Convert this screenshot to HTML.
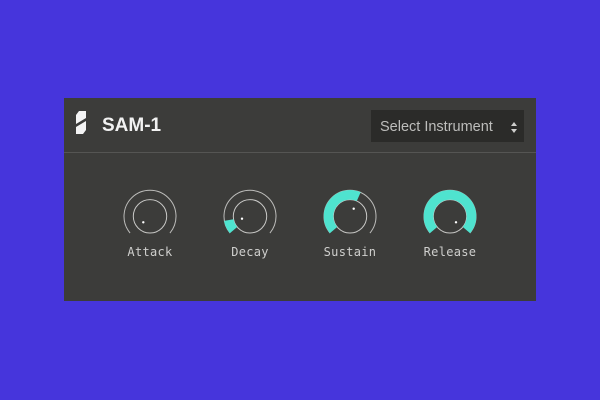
<!DOCTYPE html>
<html><head><meta charset="utf-8"><style>
html,body{margin:0;padding:0;width:600px;height:400px;background:#4635dc;overflow:hidden;font-family:"Liberation Sans",sans-serif}
.panel{position:absolute;left:64px;top:98px;width:472px;height:203px;background:#3c3c3a}
.div{position:absolute;left:0;top:54px;width:472px;height:1px;background:#555553}
.title{position:absolute;left:38px;top:17px;font-size:19px;font-weight:bold;color:#f2f2f2}
.sel{position:absolute;left:307px;top:12px;width:153px;height:32px;background:#2b2b29;color:#bdbdbb;font-size:14.5px;line-height:34px;box-sizing:border-box;padding-left:9px}
.lbl{position:absolute;top:147px;width:80px;text-align:center;font-family:"DejaVu Sans Mono","Liberation Mono",monospace;font-size:12px;letter-spacing:0.3px;color:#cfcfcd}
svg{position:absolute;left:0;top:0}
</style></head><body>
<div class="panel">
<div class="title">SAM-1</div>
<div class="sel">Select Instrument</div>
<div class="div"></div>
<div class="lbl" style="left:46px">Attack</div>
<div class="lbl" style="left:146px">Decay</div>
<div class="lbl" style="left:246px">Sustain</div>
<div class="lbl" style="left:346px">Release</div>
</div>
<svg width="600" height="400" id="s">
<polygon points="79,111 86,111 86,118 76,124 76,115" fill="#f4f4f4"/>
<polygon points="86,121 86,130 83,134 76,134 76,127" fill="#f4f4f4"/>
<polygon points="511,126 514,122 517,126" fill="#cfcfcd"/>
<polygon points="511,129 514,133 517,129" fill="#cfcfcd"/>
</svg>
<script>
var s=document.getElementById('s'),ns='http://www.w3.org/2000/svg';
function pt(cx,cy,r,a){a=a*Math.PI/180;return (cx+r*Math.cos(a)).toFixed(2)+','+(cy+r*Math.sin(a)).toFixed(2);}
function arc(cx,cy,r,a0,a1,col,w){var p=document.createElementNS(ns,'path');var large=(a1-a0)>180?1:0;p.setAttribute('d','M'+pt(cx,cy,r,a0)+' A'+r+','+r+' 0 '+large+' 1 '+pt(cx,cy,r,a1));p.setAttribute('fill','none');p.setAttribute('stroke',col);p.setAttribute('stroke-width',w);s.appendChild(p);}
var K=[[150,0,143.3,222.3],[250,30,242,218.7],[350,154,353.7,208.7],[450,260,456,222.3]];
K.forEach(function(k){var cx=k[0],cy=216.3;
arc(cx,cy,26,140,400,'#bdbdbb',1);
var c=document.createElementNS(ns,'circle');c.setAttribute('cx',cx);c.setAttribute('cy',cy);c.setAttribute('r',16.7);c.setAttribute('fill','none');c.setAttribute('stroke','#c8c8c6');c.setAttribute('stroke-width',1);s.appendChild(c);
if(k[1]>0)arc(cx,cy,21.5,140,140+k[1],'#4fe3cf',9.6);
var d=document.createElementNS(ns,'circle');d.setAttribute('cx',k[2]);d.setAttribute('cy',k[3]);d.setAttribute('r',1.2);d.setAttribute('fill','#fff');s.appendChild(d);
});
</script>
</body></html>
